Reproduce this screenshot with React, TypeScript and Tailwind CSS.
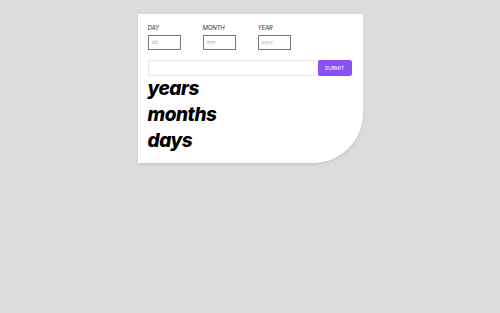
import React from 'react';

const fields = [
  { label: 'DAY', placeholder: 'dd' },
  { label: 'MONTH', placeholder: 'mm' },
  { label: 'YEAR', placeholder: 'yyyy' },
];

const App = () => {
  return (
    <div className="min-h-[313px] w-full bg-[#dcdcdc] flex justify-center pt-[14px]" style={{ fontFamily: 'Inter, "Noto Sans", sans-serif' }}>
      <div className="w-[225px] h-[149px] bg-white rounded-br-[50px] shadow-[0_2px_3px_rgba(0,0,0,0.08)] pl-[10px] pr-[11px] pt-[11px] flex flex-col">
        {/* Date inputs */}
        <div className="flex gap-[22px]">
          {fields.map((f) => (
            <div key={f.label} className="flex flex-col">
              <span className="text-[6px] italic text-[#333] leading-none mb-[4px] tracking-tight">{f.label}</span>
              <div className="w-[33px] h-[15px] border border-[#777] flex items-center pl-[3px]">
                <span className="text-[5px] text-[#aaa] leading-none">{f.placeholder}</span>
              </div>
            </div>
          ))}
        </div>

        {/* Submit row */}
        <div className="flex mt-[10px] h-[16px]">
          <div className="flex-1 border border-[#e5e5e5] border-r-0" />
          <button className="w-[34px] h-[16px] bg-[#8a4ff5] rounded-[2px] text-white text-[5px] leading-none flex items-center justify-center">
            SUBMIT
          </button>
        </div>

        {/* Results */}
        <div className="flex flex-col text-[19px] font-extrabold italic text-black leading-[26px] tracking-tight">
          <span>years</span>
          <span>months</span>
          <span>days</span>
        </div>
      </div>
    </div>
  );
};

export default App;
